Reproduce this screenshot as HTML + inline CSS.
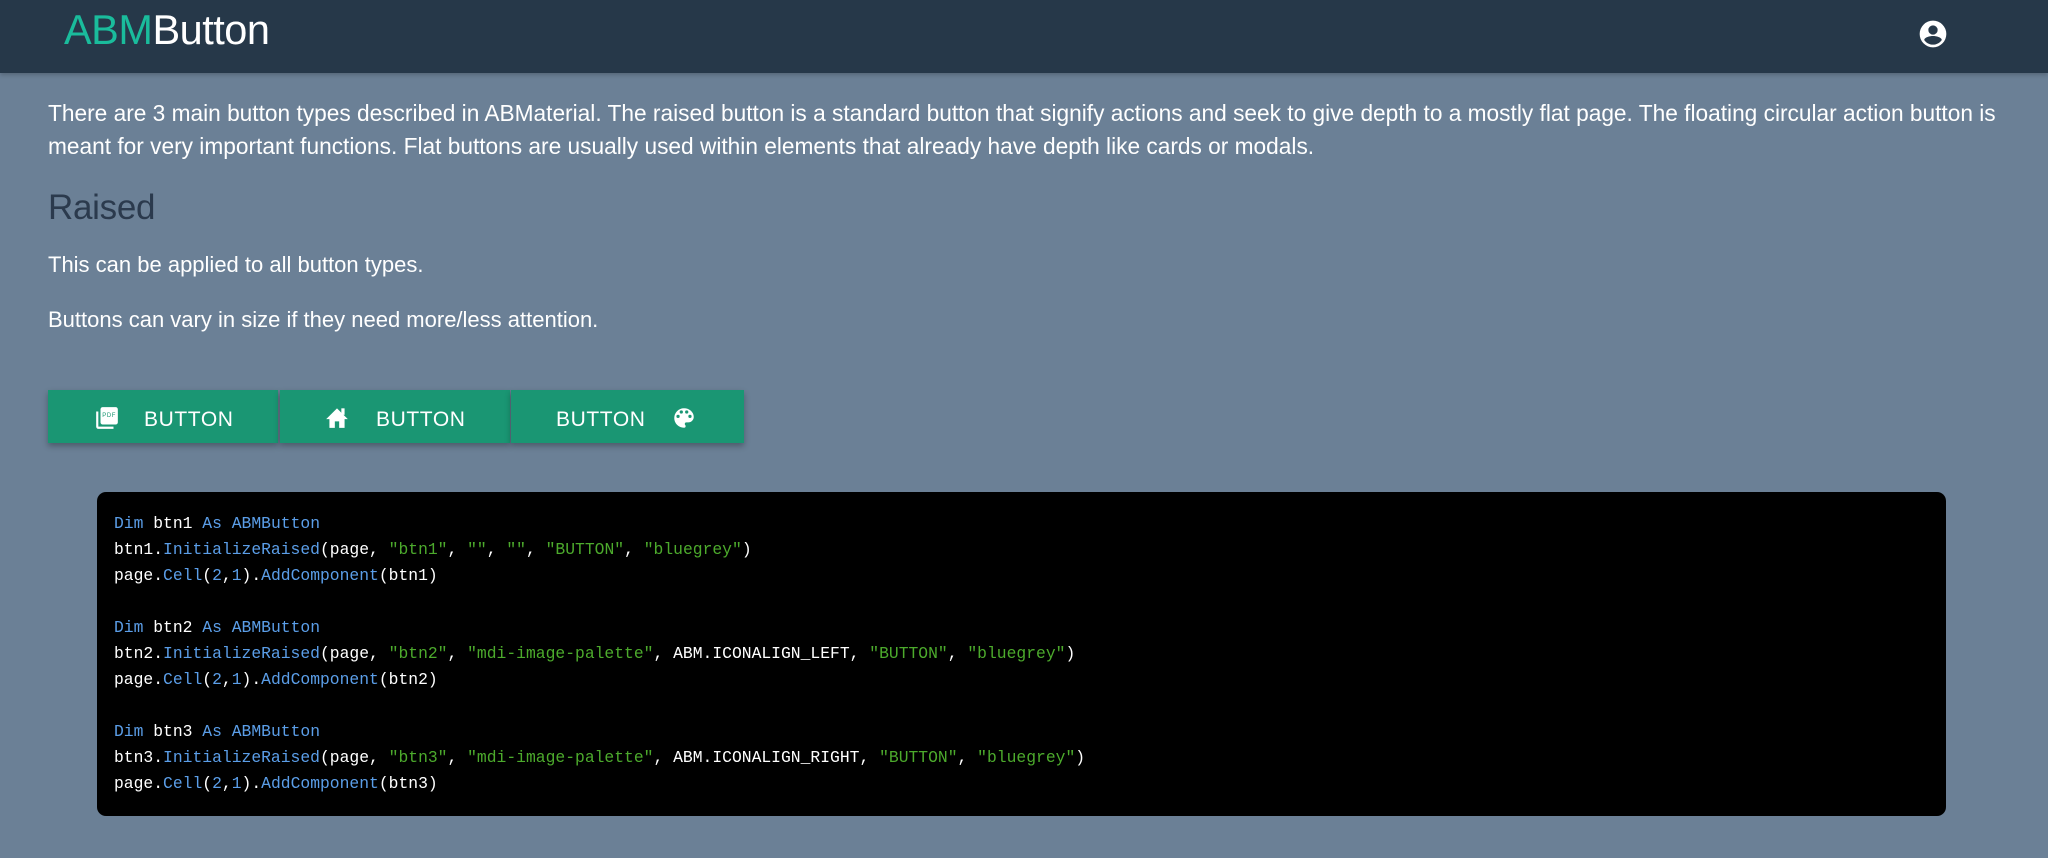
<!DOCTYPE html>
<html><head><meta charset="utf-8"><style>
*{margin:0;padding:0;box-sizing:border-box}
html,body{width:2048px;height:858px;overflow:hidden}
body{background:#6b8096;font-family:"Liberation Sans",sans-serif;color:#fff;position:relative}
.hdr{position:absolute;left:0;top:0;width:2048px;height:73px;background:#263849;box-shadow:0 2px 4px rgba(0,0,0,.2)}
.logo{position:absolute;left:64px;top:6px;font-size:41.5px;line-height:48px;letter-spacing:-0.5px}
.logo span{color:#1abc9c}
.user{position:absolute;left:1917px;top:18px}
.p{position:absolute;left:48px;font-size:22px;white-space:nowrap}
h2{position:absolute;left:48px;top:188px;font-size:35px;font-weight:normal;color:#2b3a4d;letter-spacing:-0.3px}
.btn{position:absolute;top:390px;height:53px;background:#1a9673;box-shadow:0 3px 6px rgba(0,0,0,.3);font-size:21px;letter-spacing:0.6px;line-height:53px}
.btn svg{position:absolute;top:15px}
.btn b{position:absolute;font-weight:normal;top:3px}
.code{position:absolute;left:97px;top:492px;width:1849px;height:324px;background:#000;border-radius:9px;font-family:"Liberation Mono",monospace;font-size:16.35px;line-height:26px;padding:19px 0 0 17px;white-space:pre;color:#fff}
.k{color:#5b9ee8}.s{color:#4caa2c}.f{color:#5b9ee8}
</style></head><body>
<div class="hdr"><div class="logo"><span>ABM</span>Button</div>
<svg class="user" width="32" height="32" viewBox="0 0 24 24"><path fill="#fff" d="M12 2A10 10 0 0 0 2 12a10 10 0 0 0 10 10 10 10 0 0 0 10-10A10 10 0 0 0 12 2m0 3.5a3.5 3.5 0 1 1 0 7 3.5 3.5 0 0 1 0-7M12 20c-2.8 0-5.2-1.4-6.6-3.5C5.5 14.4 9.7 13.5 12 13.5s6.5.9 6.6 3C17.2 18.6 14.8 20 12 20z"/></svg>
</div>
<div class="p" style="top:100px;font-size:22.7px">There are 3 main button types described in ABMaterial. The raised button is a standard button that signify actions and seek to give depth to a mostly flat page. The floating circular action button is</div>
<div class="p" style="top:133px;font-size:22.7px">meant for very important functions. Flat buttons are usually used within elements that already have depth like cards or modals.</div>
<h2>Raised</h2>
<div class="p" style="top:252px">This can be applied to all button types.</div>
<div class="p" style="top:307px">Buttons can vary in size if they need more/less attention.</div>
<div class="btn" style="left:48px;width:230px">
<svg style="left:46px" width="26" height="26" viewBox="0 0 24 24"><path fill="#fff" d="M4 6H2v14a2 2 0 0 0 2 2h14v-2H4zM20 2H8a2 2 0 0 0-2 2v12a2 2 0 0 0 2 2h12a2 2 0 0 0 2-2V4a2 2 0 0 0-2-2z"/><text x="14" y="11" font-size="5.5" fill="#1a9673" text-anchor="middle" font-family="Liberation Sans">PDF</text></svg>
<b style="left:96px">BUTTON</b></div>
<div class="btn" style="left:280px;width:230px">
<svg style="left:44px" width="26" height="24" viewBox="0 0 24 22"><path fill="#fff" d="M10 21v-6h4v6h5v-8h3L12 3 2 13h3v8z"/><rect x="16" y="3" width="3" height="6" fill="#fff"/></svg>
<b style="left:96px">BUTTON</b></div>
<div class="btn" style="left:511px;width:233px">
<b style="left:45px">BUTTON</b>
<svg style="left:160px" width="26" height="26" viewBox="0 0 24 24"><path fill="#fff" d="M17.5 12a1.5 1.5 0 0 1-1.5-1.5A1.5 1.5 0 0 1 17.5 9a1.5 1.5 0 0 1 1.5 1.5 1.5 1.5 0 0 1-1.5 1.5m-3-4A1.5 1.5 0 0 1 13 6.5 1.5 1.5 0 0 1 14.5 5 1.5 1.5 0 0 1 16 6.5 1.5 1.5 0 0 1 14.5 8m-5 0A1.5 1.5 0 0 1 8 6.5 1.5 1.5 0 0 1 9.5 5 1.5 1.5 0 0 1 11 6.5 1.5 1.5 0 0 1 9.5 8m-3 4A1.5 1.5 0 0 1 5 10.5 1.5 1.5 0 0 1 6.5 9 1.5 1.5 0 0 1 8 10.5 1.5 1.5 0 0 1 6.5 12M12 3a9 9 0 0 0-9 9 9 9 0 0 0 9 9 1.5 1.5 0 0 0 1.5-1.5c0-.39-.15-.74-.39-1-.23-.27-.38-.62-.38-1a1.5 1.5 0 0 1 1.5-1.5H16a5 5 0 0 0 5-5c0-4.42-4.030-8-9-8z"/></svg></div>
<div class="code"><span class="k">Dim</span> btn1 <span class="k">As</span> <span class="k">ABMButton</span>
btn1.<span class="f">InitializeRaised</span>(page, <span class="s">"btn1"</span>, <span class="s">""</span>, <span class="s">""</span>, <span class="s">"BUTTON"</span>, <span class="s">"bluegrey"</span>)
page.<span class="f">Cell</span>(<span class="k">2</span>,<span class="k">1</span>).<span class="f">AddComponent</span>(btn1)

<span class="k">Dim</span> btn2 <span class="k">As</span> <span class="k">ABMButton</span>
btn2.<span class="f">InitializeRaised</span>(page, <span class="s">"btn2"</span>, <span class="s">"mdi-image-palette"</span>, ABM.ICONALIGN_LEFT, <span class="s">"BUTTON"</span>, <span class="s">"bluegrey"</span>)
page.<span class="f">Cell</span>(<span class="k">2</span>,<span class="k">1</span>).<span class="f">AddComponent</span>(btn2)

<span class="k">Dim</span> btn3 <span class="k">As</span> <span class="k">ABMButton</span>
btn3.<span class="f">InitializeRaised</span>(page, <span class="s">"btn3"</span>, <span class="s">"mdi-image-palette"</span>, ABM.ICONALIGN_RIGHT, <span class="s">"BUTTON"</span>, <span class="s">"bluegrey"</span>)
page.<span class="f">Cell</span>(<span class="k">2</span>,<span class="k">1</span>).<span class="f">AddComponent</span>(btn3)</div>
</body></html>
